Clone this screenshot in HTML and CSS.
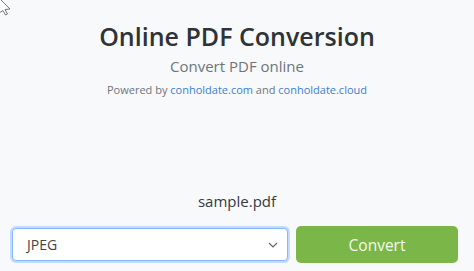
FILE: index.html
```html
<!DOCTYPE html>
<html lang="en">
  <head>
    <meta charset="UTF-8" />
    <meta name="viewport" content="width=device-width, initial-scale=1.0" />
    <title>Online PDF Conversion</title>
    <link rel="stylesheet" href="styles.css">
  </head>
  <body>
    <svg class="cursor" width="14" height="16" viewBox="0 0 14 16">
      <path d="M-2 -3 L10 9 L5 9.5 L7.5 14 L5.5 15 L3 10.5 L-1 13 Z" fill="#fff" stroke="#555" stroke-width="0.8"/>
    </svg>
    <div class="header">
      <h1>Online PDF Conversion</h1>
      <p class="sub">Convert PDF online</p>
      <p class="powered">Powered by <a href="#">conholdate.com</a> and <a href="#">conholdate.cloud</a></p>
    </div>
    <div class="file">sample.pdf</div>
    <div class="controls">
      <div class="select">
        <span>JPEG</span>
        <svg width="10" height="6" viewBox="0 0 10 6"><path d="M1 1 L5 5 L9 1" fill="none" stroke="#666" stroke-width="1.2"/></svg>
      </div>
      <button class="convert">Convert</button>
    </div>
  </body>
</html>
```
FILE: styles.css
```css
*{
    margin: 0;
    padding: 0;
    box-sizing: border-box;
}

body{
    background-color: #f8f9fa;
    font-family: 'Open Sans', sans-serif;
    width: 474px;
    height: 271px;
    overflow: hidden;
}

.cursor{
    position: absolute;
    left: 0;
    top: 0;
}

.header{
    display: flex;
    flex-direction: column;
    align-items: center;
    padding-top: 20px;
}

h1{
    font-size: 25px;
    font-weight: 600;
    color: #2f3337;
    line-height: 32px;
}

.sub{
    font-size: 15px;
    color: #6c757d;
    line-height: 20px;
    margin-top: 4px;
}

.powered{
    font-size: 11px;
    color: #6c757d;
    line-height: 16px;
    margin-top: 6px;
}

.powered a{
    color: #3a7ed3;
    text-decoration: none;
}

.file{
    text-align: center;
    font-size: 15px;
    color: #343a40;
    line-height: 22px;
    margin-top: 92px;
}

.controls{
    display: flex;
    gap: 8px;
    padding: 0 16px 0 12px;
    margin-top: 14px;
    align-items: center;
}

.select{
    width: 276px;
    height: 33px;
    background: #fff;
    border: 1px solid #86b7fe;
    border-radius: 4px;
    box-shadow: 0 0 0 2px #c4dbfb;
    display: flex;
    align-items: center;
    justify-content: space-between;
    padding: 0 9px 0 14px;
    font-size: 14px;
    color: #444;
}

.convert{
    width: 162px;
    height: 37px;
    background-color: #7ab648;
    border: none;
    border-radius: 5px;
    color: #f4fbea;
    font-family: 'Open Sans', sans-serif;
    font-size: 15.5px;
}
```
